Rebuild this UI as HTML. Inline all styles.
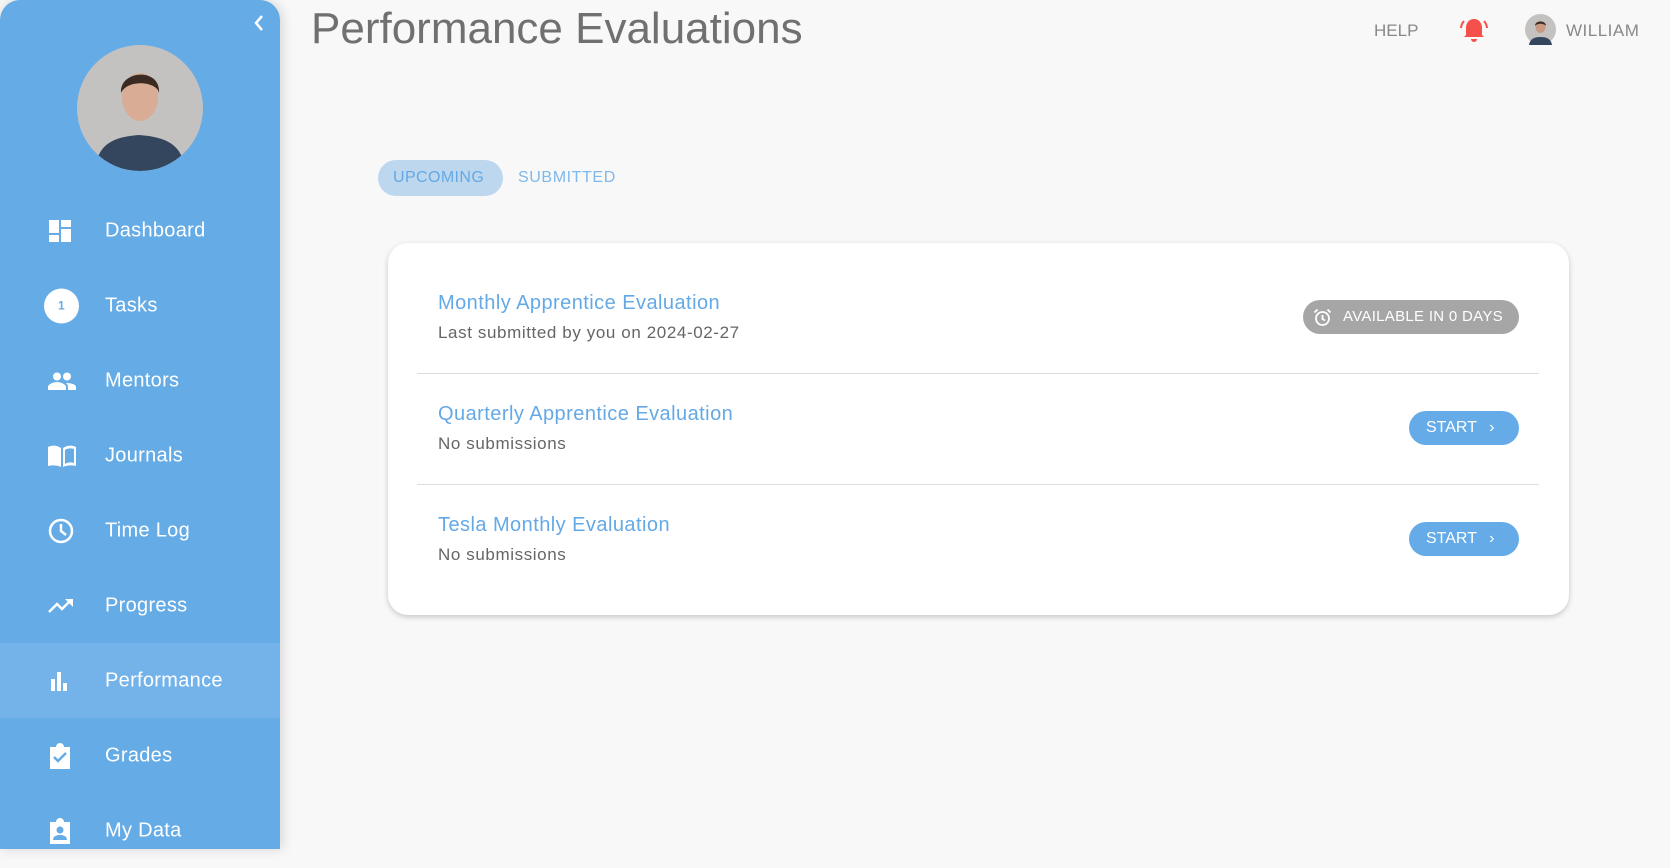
<!DOCTYPE html>
<html><head><meta charset="utf-8"><style>
*{box-sizing:border-box;margin:0;padding:0}
html,body{width:1670px;height:849px}
body{background:#f8f8f8;font-family:"Liberation Sans",sans-serif;position:relative;overflow:hidden}
.sb{position:absolute;left:0;top:0;width:280px;height:849px;background:#65abe6;border-radius:20px 20px 0 0;box-shadow:2px 0 12px rgba(0,0,0,.15)}
.nav{position:absolute;left:0;width:280px;height:75px;color:#fff;font-size:20px;letter-spacing:.3px}
.nav span{position:absolute;left:105px;top:50%;transform:translateY(-50%)}
.nav svg,.nav .b{position:absolute;left:48px;top:50%;transform:translateY(-50%)}
.act{background:#73b3ea}
.abs{position:absolute}
.row{position:absolute;left:438px}
.t{font-size:20px;color:#64a9e6;letter-spacing:.45px}
.s{font-size:17px;color:#666;margin-top:8px;letter-spacing:.6px}
.btn{position:absolute;left:1409px;width:110px;height:34px;border-radius:17px;background:#64abe7;color:#fff;font-size:16px;line-height:34px;padding-left:17px}
</style></head><body>
<div class="sb">
<svg class="abs" style="left:252px;top:14px" width="14" height="18" viewBox="0 0 14 18"><path d="M10 2 L4 9 L10 16" stroke="#fff" stroke-width="2.5" fill="none"/></svg>
<svg class="abs" style="left:77px;top:45px" width="126" height="126" viewBox="0 0 126 126"><defs><clipPath id="c"><circle cx="63" cy="63" r="63"/></clipPath></defs><g clip-path="url(#c)"><rect width="126" height="126" fill="#c4c2c0"/><path d="M18 126 C20 100 35 92 62 90 C90 92 106 100 108 126Z" fill="#34465d"/><ellipse cx="63" cy="52" rx="18" ry="24" fill="#d9ac95"/><path d="M44 48 C42 25 84 22 82 48 C80 36 50 34 44 48Z" fill="#3a2a22"/></g></svg>
<div class="nav" style="top:193px"><svg width="24" height="24" viewBox="0 0 24 24"><path fill="#fff" d="M1 1h10v13H1zM13 1h10v7H13zM13 10h10v13H13zM1 16h10v7H1z"/></svg><span>Dashboard</span></div>
<div class="nav" style="top:268px"><div class="b" style="left:44px;width:35px;height:35px;border-radius:50%;background:#fff;color:#64abe7;font-size:12px;text-align:center;line-height:35px;font-weight:bold">1</div><span>Tasks</span></div>
<div class="nav" style="top:343px"><svg width="28" height="18" viewBox="0 0 28 18"><circle cx="9" cy="4.5" r="4" fill="#fff"/><circle cx="19" cy="4.5" r="4" fill="#fff"/><path fill="#fff" d="M0 18v-3c0-3 6-5 9-5s9 2 9 5v3zM20 18v-3c0-2-1-3-2-4 4 0 10 1 10 4v3z"/></svg><span>Mentors</span></div>
<div class="nav" style="top:418px"><svg width="28" height="22" viewBox="0 0 28 22"><path fill="#fff" d="M0 2c4-2 9-2 13 1v19C9 20 4 20 0 21zM15 3c4-3 9-3 13-1v19c-4-1-9-1-13 1z"/><path fill="#65abe6" d="M17 5c3-2 6-2 9-1v14c-3-1-6-1-9 1z"/></svg><span>Journals</span></div>
<div class="nav" style="top:493px"><svg width="26" height="26" viewBox="0 0 26 26"><circle cx="13" cy="13" r="11" stroke="#fff" stroke-width="2.5" fill="none"/><path d="M13 6v7l5 4" stroke="#fff" stroke-width="2.5" fill="none"/></svg><span>Time Log</span></div>
<div class="nav" style="top:568px"><svg width="26" height="16" viewBox="0 0 26 16"><path d="M1 14l8-8 5 5 9-9" stroke="#fff" stroke-width="2.5" fill="none"/><path fill="#fff" d="M17 1h8v8z"/></svg><span>Progress</span></div>
<div class="nav act" style="top:643px"><svg width="22" height="20" viewBox="0 0 22 20"><path fill="#fff" d="M3 8h4v12H3zM9 1h4v19H9zM15 12h4v8h-4z"/></svg><span>Performance</span></div>
<div class="nav" style="top:718px"><svg width="24" height="26" viewBox="0 0 24 26"><path fill="#fff" d="M2 4h6a4 4 0 0 1 8 0h6v22H2z"/><path d="M6 14l4 4 8-8" stroke="#65abe6" stroke-width="2.5" fill="none"/></svg><span>Grades</span></div>
<div class="nav" style="top:793px"><svg width="24" height="26" viewBox="0 0 24 26"><path fill="#fff" d="M2 4h6a4 4 0 0 1 8 0h6v22H2z"/><circle cx="12" cy="12" r="3.5" fill="#65abe6"/><path fill="#65abe6" d="M5 22c0-4 4-5 7-5s7 1 7 5z"/></svg><span>My Data</span></div>
</div>
<div class="abs" style="left:311px;top:4px;font-size:44px;color:#707070;font-weight:300">Performance Evaluations</div>
<div class="abs" style="left:1374px;top:21px;font-size:17px;color:#888">HELP</div>
<svg class="abs" style="left:1460px;top:16px" width="28" height="28" viewBox="0 0 28 28"><path fill="#f5504a" d="M14 3c-5 0-8 4-8 9v7l-2 2h20l-2-2v-7c0-5-3-9-8-9zM11 23h6a3 3 0 0 1-6 0z"/><path d="M4 5a12 12 0 0 0-3 7M24 5a12 12 0 0 1 3 7" stroke="#f5504a" stroke-width="2" fill="none"/></svg>
<svg class="abs" style="left:1525px;top:14px" width="31" height="31" viewBox="0 0 31 31"><circle cx="15.5" cy="15.5" r="15.5" fill="#c4c2c0"/><path d="M4 31c1-6 5-8 11.5-8S26 25 27 31z" fill="#34465d"/><ellipse cx="15.5" cy="13" rx="5" ry="6" fill="#c99a82"/><path d="M10 12c0-6 11-6 11 0-2-3-9-3-11 0z" fill="#3a2a22"/></svg>
<div class="abs" style="left:1566px;top:21px;font-size:17px;color:#888;letter-spacing:.5px">WILLIAM</div>
<div class="abs" style="left:378px;top:160px;width:125px;height:36px;border-radius:18px;background:#bcd7ee"></div>
<div class="abs" style="left:393px;top:169px;font-size:16px;color:#64a9e6;letter-spacing:.4px">UPCOMING</div>
<div class="abs" style="left:518px;top:169px;font-size:16px;color:#7fb8ea;letter-spacing:.6px">SUBMITTED</div>
<div class="abs" style="left:388px;top:243px;width:1181px;height:372px;background:#fff;border-radius:20px;box-shadow:0 2px 6px rgba(0,0,0,.2)"></div>
<div class="abs" style="left:417px;top:373px;width:1122px;height:1px;background:#ddd"></div>
<div class="abs" style="left:417px;top:484px;width:1122px;height:1px;background:#ddd"></div>
<div class="row" style="top:292px"><div class="t">Monthly Apprentice Evaluation</div><div class="s">Last submitted by you on 2024-02-27</div></div>
<div class="row" style="top:403px"><div class="t">Quarterly Apprentice Evaluation</div><div class="s">No submissions</div></div>
<div class="row" style="top:514px"><div class="t">Tesla Monthly Evaluation</div><div class="s">No submissions</div></div>
<div class="abs" style="left:1303px;top:300px;width:216px;height:34px;border-radius:17px;background:#a6a6a6;color:#fff;font-size:15px;line-height:34px;padding-left:40px;letter-spacing:.3px">AVAILABLE IN 0 DAYS</div>
<svg class="abs" style="left:1313px;top:308px" width="19" height="19" viewBox="0 0 19 19"><circle cx="9.5" cy="10.5" r="6.5" stroke="#fff" stroke-width="1.8" fill="none"/><path d="M9.5 7v4l2.5 1.5M1.5 4.5l3-3M17.5 4.5l-3-3" stroke="#fff" stroke-width="1.8" fill="none"/></svg>
<div class="btn" style="top:411px">START <span style="margin-left:8px">›</span></div>
<div class="btn" style="top:522px">START <span style="margin-left:8px">›</span></div>
</body></html>
